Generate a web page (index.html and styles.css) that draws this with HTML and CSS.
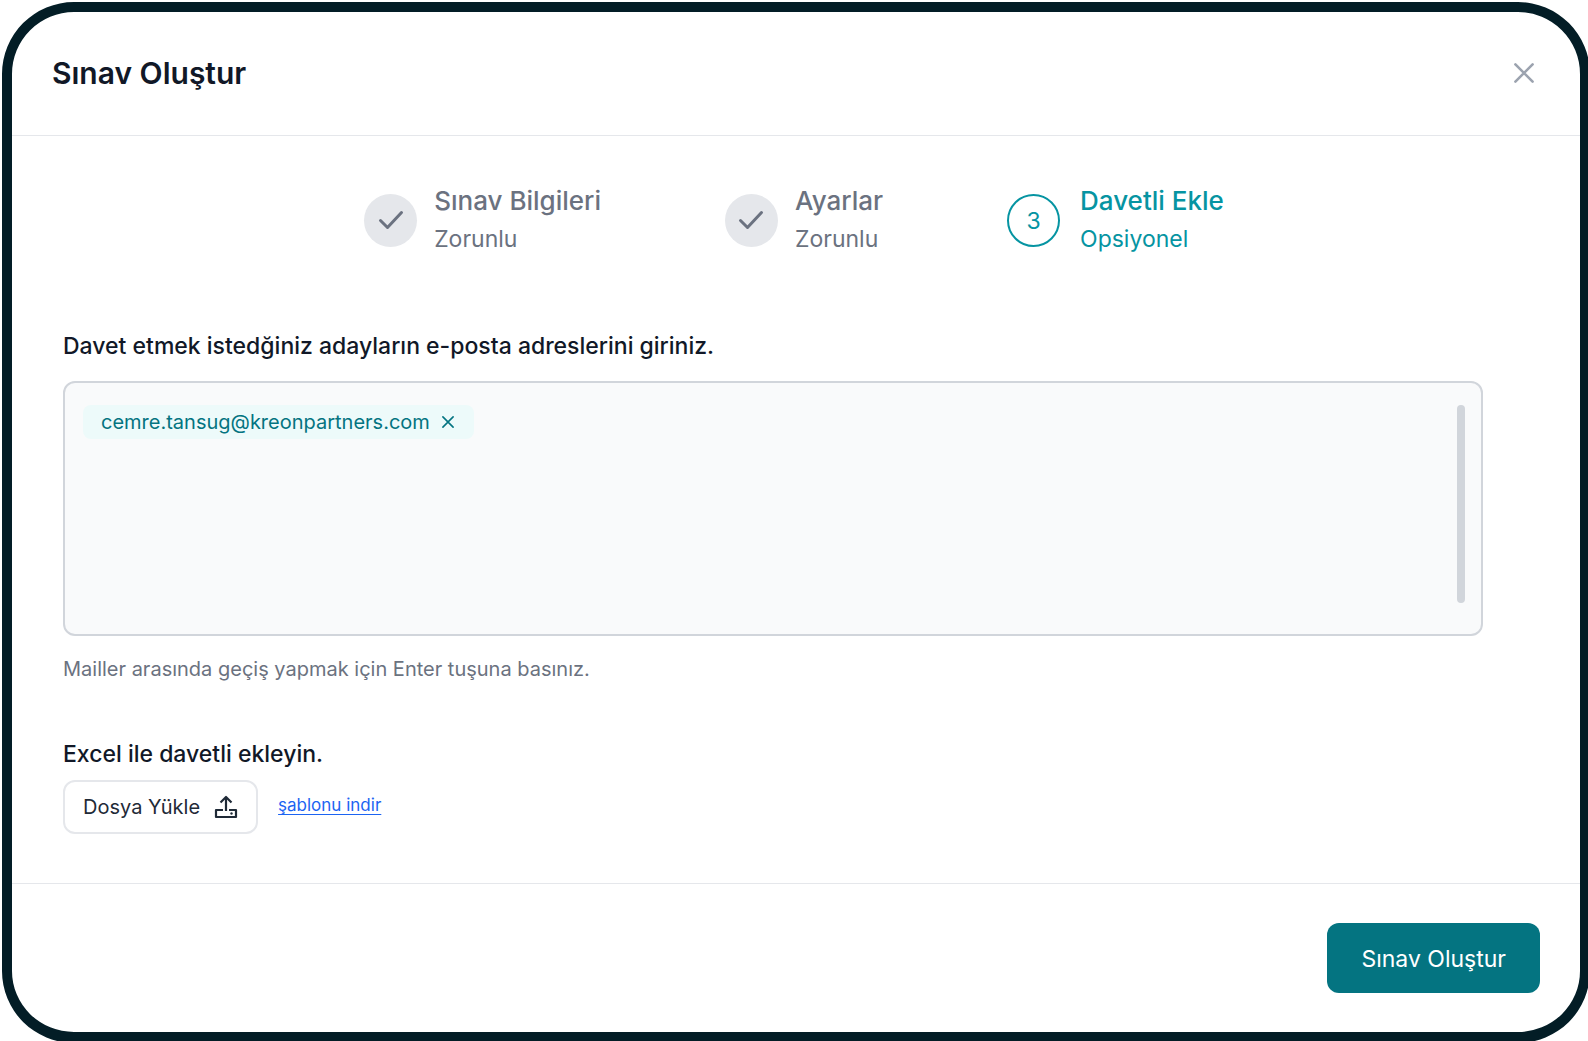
FILE: index.html
```html
<!DOCTYPE html>
<html lang="tr">
<head>
    <meta charset="UTF-8">
    <meta name="viewport" content="width=device-width, initial-scale=1.0">
    <title>Sınav Oluştur</title>
    <link rel="stylesheet" href="styles.css">
</head>
<body>

<div class="modal">
    <header class="modal-header">
        <h1>Sınav Oluştur</h1>
        <button type="button" class="close-button" aria-label="Kapat">
            <svg width="20" height="20" viewBox="0 0 20 20" fill="none" stroke="currentColor" stroke-width="2.6" stroke-linecap="round">
                <path d="M1.4 1.4L18.6 18.6M18.6 1.4L1.4 18.6"/>
            </svg>
        </button>
    </header>

    <ol class="steps">
        <li class="step">
            <span class="step-circle">
                <svg width="26" height="20" viewBox="0 0 26 20" fill="none" stroke="currentColor" stroke-width="3" stroke-linecap="round" stroke-linejoin="round">
                    <path d="M2.5 10.5L9.5 17.5L23.5 2.5"/>
                </svg>
            </span>
            <div class="step-text">
                <div class="step-title">Sınav Bilgileri</div>
                <div class="step-note">Zorunlu</div>
            </div>
        </li>
        <li class="step">
            <span class="step-circle">
                <svg width="26" height="20" viewBox="0 0 26 20" fill="none" stroke="currentColor" stroke-width="3" stroke-linecap="round" stroke-linejoin="round">
                    <path d="M2.5 10.5L9.5 17.5L23.5 2.5"/>
                </svg>
            </span>
            <div class="step-text">
                <div class="step-title">Ayarlar</div>
                <div class="step-note">Zorunlu</div>
            </div>
        </li>
        <li class="step active" aria-current="step">
            <span class="step-circle">3</span>
            <div class="step-text">
                <div class="step-title">Davetli Ekle</div>
                <div class="step-note">Opsiyonel</div>
            </div>
        </li>
    </ol>

    <form class="invite-form" id="inviteForm">
        <label class="form-label" for="email">Davet etmek istedğiniz adayların e-posta adreslerini giriniz.</label>
        <div class="mail-box">
            <div class="mail-list">
                <span class="chip">
                    cemre.tansug@kreonpartners.com
                    <button type="button" class="chip-remove" aria-label="Kaldır">
                        <svg width="12" height="12" viewBox="0 0 12 12" fill="none" stroke="currentColor" stroke-width="1.6" stroke-linecap="round">
                            <path d="M0.9 0.9L11.1 11.1M11.1 0.9L0.9 11.1"/>
                        </svg>
                    </button>
                </span>
                <input type="email" id="email" class="mail-input">
            </div>
            <div class="scroll-thumb"></div>
        </div>
        <p class="help-text">Mailler arasında geçiş yapmak için Enter tuşuna basınız.</p>

        <div class="form-label">Excel ile davetli ekleyin.</div>
        <div class="upload-row">
            <button type="button" class="upload-button">
                Dosya Yükle
                <svg width="24" height="24" viewBox="0 0 24 24" fill="none" stroke="currentColor" stroke-width="2.2" stroke-linejoin="round">
                    <path d="M12 16V2.5M6.500 7.500L12 2L17.500 7.500"/>
                    <path d="M9 15H2V22H22V15H15"/>
                    <circle cx="17.5" cy="18.500" r="1.2" fill="currentColor" stroke="none"/>
                </svg>
            </button>
            <a href="#" class="template-link">şablonu indir</a>
        </div>
    </form>

    <footer class="modal-footer">
        <button type="submit" form="inviteForm" class="submit-button">Sınav Oluştur</button>
    </footer>
</div>

</body>
</html>
```
FILE: styles.css
```css
* {
    box-sizing: border-box;
}
body {
    margin: 0;
    height: 100vh;
    overflow: hidden;
    background-color: #fff;
    font-family: Inter, "Liberation Sans", sans-serif;
    color: #111827;
}
button {
    font-family: inherit;
    cursor: pointer;
}
svg {
    display: block;
    flex: none;
}

/* Modal frame */
.modal {
    display: flex;
    flex-direction: column;
    min-height: 100vh;
    margin: 2px -2px 0 2px;
    border: 10px solid #031d26;
    border-bottom-width: 11px;
    border-radius: 72px;
    background-color: #fff;
}
.modal-header {
    display: flex;
    justify-content: space-between;
    align-items: center;
    height: 124px;
    padding: 0 46px 2px 40px;
    border-bottom: 1px solid #e5e7eb;
}
.modal-header h1 {
    margin: 0;
    font-size: 30px;
    font-weight: 600;
    line-height: 36px;
}
.close-button {
    padding: 0;
    border: 0;
    background: none;
    color: #9ca3af;
}

/* Steps */
.steps {
    display: flex;
    justify-content: center;
    gap: 124px;
    margin: 46px 0 72px;
    padding: 0 4px 0 0;
    list-style: none;
}
.step {
    display: flex;
    align-items: center;
    gap: 17px;
    color: #6b7280;
}
.step-circle {
    display: flex;
    justify-content: center;
    align-items: center;
    width: 53px;
    height: 53px;
    border-radius: 50%;
    background-color: #e5e7eb;
    font-size: 23px;
}
.step-title {
    font-size: 26px;
    font-weight: 500;
    line-height: 38px;
}
.step-note {
    font-size: 23px;
    line-height: 38px;
}
.step.active {
    gap: 20px;
    color: #0694a2;
}
.step.active .step-circle {
    padding-top: 2px;
    border: 2px solid #0694a2;
    background-color: #fff;
}

/* Form */
.invite-form {
    padding: 0 97px 49px 51px;
}
.form-label {
    display: block;
    font-size: 23px;
    font-weight: 500;
    line-height: 32px;
}
.mail-box {
    display: flex;
    justify-content: space-between;
    height: 255px;
    margin-top: 19px;
    padding: 22px 16px 31px 18px;
    border: 2px solid #d1d5db;
    border-radius: 12px;
    background-color: #f9fafb;
}
.mail-list {
    display: flex;
    flex: 1;
    align-items: flex-start;
    gap: 12px;
}
.chip {
    display: flex;
    align-items: center;
    gap: 12px;
    height: 34px;
    padding: 0 20px 0 18px;
    border-radius: 8px;
    background-color: #edfafa;
    color: #047481;
    font-size: 20px;
}
.chip-remove {
    padding: 0;
    border: 0;
    background: none;
    color: inherit;
}
.mail-input {
    flex: 1;
    height: 34px;
    border: 0;
    outline: none;
    background: none;
    font-family: inherit;
    font-size: 20px;
}
.scroll-thumb {
    width: 8px;
    border-radius: 4px;
    background-color: #d1d5db;
}
.help-text {
    margin: 19px 0 55px;
    color: #6b7280;
    font-size: 20px;
    line-height: 28px;
}
.upload-row {
    display: flex;
    align-items: center;
    gap: 20px;
    margin-top: 10px;
}
.upload-button {
    display: flex;
    align-items: center;
    gap: 14px;
    height: 54px;
    padding: 0 18px;
    border: 2px solid #e5e7eb;
    border-radius: 12px;
    background-color: #fff;
    color: #1f2a37;
    font-size: 20px;
}
.template-link {
    padding-bottom: 4px;
    color: #1c64f2;
    font-size: 17px;
    text-underline-offset: 3px;
}

/* Footer */
.modal-footer {
    display: flex;
    flex: 1;
    justify-content: flex-end;
    align-items: center;
    padding: 0 40px;
    border-top: 1px solid #e5e7eb;
}
.submit-button {
    height: 70px;
    padding: 2px 34px 0;
    border: 0;
    border-radius: 12px;
    background-color: #047481;
    color: #fff;
    font-size: 23px;
}
```
